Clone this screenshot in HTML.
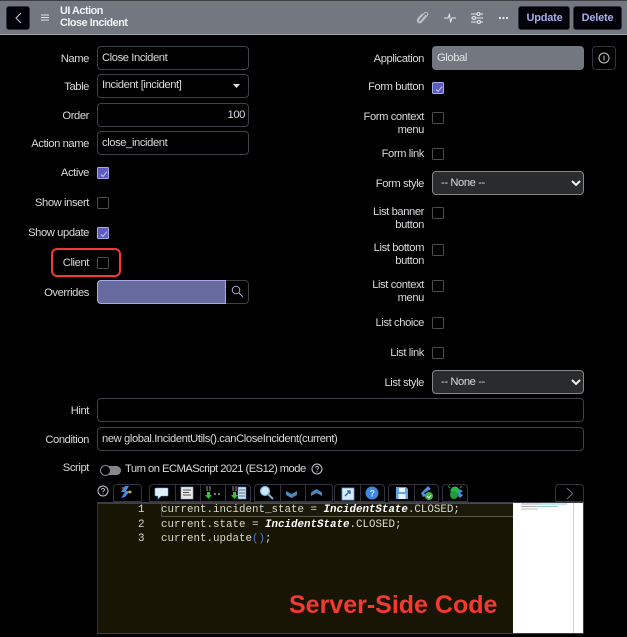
<!DOCTYPE html>
<html><head><meta charset="utf-8">
<style>
html,body{margin:0;padding:0;background:#000;}
body{width:627px;height:637px;position:relative;overflow:hidden;font-family:"Liberation Sans",sans-serif;font-size:11.2px;color:#d8dadd;letter-spacing:-.4px;}
div,span{position:absolute;box-sizing:border-box;white-space:nowrap;}
.l{text-align:right;line-height:14px;margin-top:1px;}
.ll{width:89px;left:0;}
.lr{width:110px;left:314px;}
.i{height:24px;border:1px solid #3f4148;border-radius:4px;line-height:23px;padding-left:4px;color:#d8dadd;}
.c{width:12px;height:12px;border:1px solid #4b4c50;border-radius:1.5px;}
.k{width:12px;height:12px;border:1px solid #a9abe8;background:#5a5cc0;border-radius:1.5px;}
.k svg{position:absolute;left:1px;top:1px;}
.s{left:432px;width:152px;height:24px;background:#2a2b2c;border:1px solid #85878b;border-radius:4px;line-height:23px;padding-left:8px;}
.s svg{position:absolute;left:138px;top:8px;}
.g{top:484px;height:18px;border:1px solid #33343f;border-radius:4px 4px 0 0;}
.p{top:0;width:1px;height:17px;background:#33343f;}
.m{font-family:"Liberation Mono",monospace;font-size:10.83px;letter-spacing:0;color:#dcdccc;line-height:14px;}
.m b{font-style:italic;color:#fff;}
</style></head><body>

<div style="left:0;top:0;width:627px;height:35px;background:#737880;border-top:1px solid #3c3e42;border-bottom:1px solid #a0a4aa;"></div>
<div style="left:6px;top:6px;width:24px;height:24px;background:#020208;border:1px solid #33343f;border-radius:3px;"></div>
<svg style="position:absolute;left:14px;top:11px" width="9" height="14"><path d="M7 2 L2 7 L7 12" fill="none" stroke="#c9cad0" stroke-width="1"/></svg>
<svg style="position:absolute;left:40px;top:14px" width="10" height="8"><path d="M1 1H9M1 3.5H9M1 6H9" stroke="#e0e2e4" stroke-width="1"/></svg>
<div style="left:60px;top:5px;line-height:13px;font-weight:bold;color:#f2f3f4;font-size:10.8px;letter-spacing:-.45px">UI Action</div>
<div style="left:60px;top:17px;line-height:13px;font-weight:bold;color:#f2f3f4;font-size:10.8px;letter-spacing:-.45px">Close Incident</div>

<svg style="position:absolute;left:416px;top:11px" width="14" height="14"><path d="M10 4 L5 10 C3.500 11.800 1.500 10 3 8 L8.500 2 C10.500 0.500 12.800 2.500 11.200 4.500 L6 10.500 C3.500 13.500 0 11 2 7.500 L6 3" fill="none" stroke="#bfc2c6" stroke-width="1"/></svg>
<svg style="position:absolute;left:443px;top:11px" width="14" height="14"><path d="M1 7H5L6.5 3.5L7.5 11.5L9 7H13" fill="none" stroke="#e8e9eb" stroke-width="1"/></svg>
<svg style="position:absolute;left:470px;top:11px" width="14" height="14"><path d="M1 3H13M1 7H13M1 11H13" stroke="#e8e9eb" stroke-width="1"/><circle cx="8.5" cy="3" r="1.5" fill="#737880" stroke="#e8e9eb"/><circle cx="4" cy="7" r="1.5" fill="#737880" stroke="#e8e9eb"/><circle cx="9" cy="11" r="1.5" fill="#737880" stroke="#e8e9eb"/></svg>
<svg style="position:absolute;left:498px;top:15px" width="12" height="6"><circle cx="2" cy="3" r="1.1" fill="#eee"/><circle cx="5.5" cy="3" r="1.1" fill="#eee"/><circle cx="9" cy="3" r="1.1" fill="#eee"/></svg>
<div style="left:518px;top:6px;width:52px;height:24px;background:#020208;border:1px solid #33343f;border-radius:3px;text-align:center;line-height:22px;font-weight:bold;color:#a9abe8;font-size:11px;letter-spacing:-.2px;padding-left:1px">Update</div>
<div style="left:573px;top:6px;width:49px;height:24px;background:#020208;border:1px solid #33343f;border-radius:3px;text-align:center;line-height:22px;font-weight:bold;color:#a9abe8;font-size:11px;letter-spacing:-.2px">Delete</div>

<div class="l ll" style="top:51px">Name</div>
<div class="i" style="left:97px;top:46px;width:152px">Close Incident</div>
<div class="l ll" style="top:79px">Table</div>
<div class="i" style="left:97px;top:74px;width:152px;line-height:21px">Incident [incident]</div>
<svg style="position:absolute;left:233px;top:84px" width="8" height="5"><path d="M0 0H7L3.5 4Z" fill="#e8e8e8"/></svg>
<div class="l ll" style="top:108px">Order</div>
<div class="i" style="left:97px;top:103px;width:152px;text-align:right;padding-right:3px">100</div>
<div class="l ll" style="top:136px">Action name</div>
<div class="i" style="left:97px;top:131px;width:152px">close_incident</div>

<div class="l ll" style="top:165px">Active</div>
<div class="k" style="left:97px;top:167px"><svg width="10" height="10"><path d="M2 5.5L4 7.5L8 2.5" fill="none" stroke="#d5d6f5" stroke-width=".9"/></svg></div>
<div class="l ll" style="top:195px">Show insert</div>
<div class="c" style="left:97px;top:197px"></div>
<div class="l ll" style="top:225px">Show update</div>
<div class="k" style="left:97px;top:227px"><svg width="10" height="10"><path d="M2 5.5L4 7.5L8 2.5" fill="none" stroke="#d5d6f5" stroke-width=".9"/></svg></div>
<div class="l ll" style="top:255px">Client</div>
<div class="c" style="left:97px;top:257px"></div>
<div style="left:51px;top:248px;width:70px;height:29px;border:2px solid #f5392f;border-radius:6px"></div>
<div class="l ll" style="top:285px">Overrides</div>
<div style="left:97px;top:280px;width:152px;height:24px;border:1px solid #3f4148;border-radius:4px"></div>
<div style="left:97px;top:280px;width:129px;height:24px;background:#676a9f;border:1px solid #a9abe8;border-radius:4px 0 0 4px"></div>
<svg style="position:absolute;left:231px;top:285px" width="13" height="13"><circle cx="5" cy="5" r="3.8" fill="none" stroke="#a8abd0" stroke-width="1"/><path d="M8 8L12 12" stroke="#a8abd0" stroke-width="1"/></svg>

<div class="l lr" style="top:51px">Application</div>
<div style="left:432px;top:46px;width:152px;height:24px;background:#737880;border-radius:4px;line-height:25px;padding-left:5px;color:#e2e3e5">Global</div>
<div style="left:592px;top:46px;width:24px;height:24px;border:1px solid #33343f;border-radius:4px"></div>
<svg style="position:absolute;left:598px;top:52px" width="12" height="12"><circle cx="6" cy="6" r="5" fill="none" stroke="#c5c7ce" stroke-width="1"/><path d="M6 3.5V8.5" stroke="#c5c7ce" stroke-width="1"/></svg>
<div class="l lr" style="top:79px">Form button</div>
<div class="k" style="left:432px;top:82px"><svg width="10" height="10"><path d="M2 5.5L4 7.5L8 2.5" fill="none" stroke="#d5d6f5" stroke-width=".9"/></svg></div>
<div class="l lr" style="top:110px;line-height:13px">Form context<br>menu</div>
<div class="c" style="left:432px;top:112px"></div>
<div class="l lr" style="top:146px">Form link</div>
<div class="c" style="left:432px;top:148px"></div>
<div class="l lr" style="top:176px">Form style</div>
<div class="s" style="top:171px">-- None --<svg width="10" height="7"><path d="M1 1L5 5L9 1" fill="none" stroke="#f0f0f0" stroke-width="2"/></svg></div>
<div class="l lr" style="top:205px;line-height:13px">List banner<br>button</div>
<div class="c" style="left:432px;top:207px"></div>
<div class="l lr" style="top:241px;line-height:13px">List bottom<br>button</div>
<div class="c" style="left:432px;top:244px"></div>
<div class="l lr" style="top:278px;line-height:13px">List context<br>menu</div>
<div class="c" style="left:432px;top:280px"></div>
<div class="l lr" style="top:315px">List choice</div>
<div class="c" style="left:432px;top:317px"></div>
<div class="l lr" style="top:345px">List link</div>
<div class="c" style="left:432px;top:347px"></div>
<div class="l lr" style="top:375px">List style</div>
<div class="s" style="top:370px">-- None --<svg width="10" height="7"><path d="M1 1L5 5L9 1" fill="none" stroke="#f0f0f0" stroke-width="2"/></svg></div>

<div class="l ll" style="top:403px">Hint</div>
<div class="i" style="left:97px;top:398px;width:487px"></div>
<div class="l ll" style="top:432px">Condition</div>
<div class="i" style="left:97px;top:427px;width:487px">new global.IncidentUtils().canCloseIncident(current)</div>
<div class="l ll" style="top:460px">Script</div>
<div style="left:100px;top:466px;width:21px;height:9px;background:#85878b;border-radius:5px"></div>
<div style="left:100px;top:465px;width:11px;height:11px;background:#000;border:1px solid #85878b;border-radius:50%"></div>
<div style="left:125px;top:462px;line-height:14px;letter-spacing:-.53px">Turn on ECMAScript 2021 (ES12) mode</div>
<svg style="position:absolute;left:311px;top:463px" width="12" height="12"><circle cx="6" cy="6" r="5" fill="none" stroke="#c5c7ce" stroke-width="1"/><path d="M4.5 4.8C4.5 3 7.5 3 7.5 4.8C7.5 6 6 5.8 6 7.2M6 8.2V9.2" fill="none" stroke="#c5c7ce" stroke-width=".9"/></svg>

<svg style="position:absolute;left:97px;top:485px" width="12" height="12"><circle cx="6" cy="6" r="5" fill="none" stroke="#c5c7ce" stroke-width="1"/><path d="M4.5 4.8C4.5 3 7.5 3 7.5 4.8C7.5 6 6 5.8 6 7.2M6 8.2V9.2" fill="none" stroke="#c5c7ce" stroke-width=".9"/></svg>
<div class="g" style="left:113px;width:29px"></div>
<div class="g" style="left:149px;width:102px"><span class="p" style="left:25px"></span><span class="p" style="left:50px"></span><span class="p" style="left:75px"></span></div>
<div class="g" style="left:254px;width:79px"><span class="p" style="left:25px"></span><span class="p" style="left:50px"></span></div>
<div class="g" style="left:334px;width:51px"><span class="p" style="left:25px"></span></div>
<div class="g" style="left:388px;width:51px"><span class="p" style="left:25px"></span></div>
<div class="g" style="left:442px;width:26px"></div>
<div class="g" style="left:555px;width:29px"></div>
<svg style="position:absolute;left:566px;top:487px" width="8" height="13"><path d="M1 1L6.5 6.5L1 12" fill="none" stroke="#6c6e7c" stroke-width="1"/></svg>

<svg style="position:absolute;left:0;top:484px" width="480" height="18">
<path d="M125 2L129 2L126 7L130 7L125 13L121 14L125 8L121 8Z" fill="#3f8fe8"/><circle cx="130" cy="8" r="1.5" fill="#e8a030"/><circle cx="123" cy="4" r="1" fill="#e04040"/>
<path d="M156 4H167Q168 4 168 5V11Q168 12 167 12H161L158 15V12H156Q155 12 155 11V5Q155 4 156 4Z" fill="#dff0fb" stroke="#6fb4e4" stroke-width=".6"/>
<rect x="181" y="3" width="12" height="12" fill="#e6e9ec" stroke="#8fa9c0" stroke-width=".6"/><path d="M183 6H191M183 8.5H189M183 11H191" stroke="#555" stroke-width="1"/>
<path d="M207 2V7M210 2V7" stroke="#999" stroke-width="1"/><path d="M207 8V11H205L208.500 15L212 11H210V8Z" fill="#33c42f"/><path d="M214 10H216M218 10H220" stroke="#777" stroke-width="2"/>
<path d="M233 2V7M236 2V7" stroke="#999" stroke-width="1"/><path d="M233 8V11H231L234.500 15L238 11H236V8Z" fill="#33c42f"/><rect x="238" y="3" width="8" height="12" fill="#cfe1f2" stroke="#4f8fd0" stroke-width=".6"/><path d="M239 6H245M239 9H245M239 12H245" stroke="#5a6d80" stroke-width="1"/>
<circle cx="265" cy="7" r="4.500" fill="#cfe8fa" stroke="#79b4dd" stroke-width="1.200"/><path d="M268.500 10.500L273 15" stroke="#7fa8cc" stroke-width="2"/>
<path d="M286 7L291.500 10L297 7L297 11L291.500 14L286 11Z" fill="#4e88b8"/>
<path d="M311 12L316.500 9L322 12L322 8.500L316.500 5L311 8.500Z" fill="#4e88b8"/>
<rect x="342" y="4" width="12" height="12" fill="#d8e9f7" stroke="#6da7d6" stroke-width=".8"/><path d="M345 12L350 7M347 7H350V10" stroke="#2465a5" stroke-width="1.300" fill="none"/>
<circle cx="372" cy="9" r="6.500" fill="#3d86de"/><text x="372" y="12.500" text-anchor="middle" font-family="Liberation Sans" font-size="9" font-weight="bold" fill="#d7e9fb">?</text>
<path d="M396 3H406L408 5V15H396Z" fill="#5ea5ea"/><rect x="399" y="4" width="6" height="4" fill="#e8f2fb"/><rect x="398.500" y="10" width="7" height="5" fill="#e8f2fb"/>
<path d="M428 2L431 5L424 9L427 12L423 13L421 9Z" fill="#4f8fe0"/><circle cx="429" cy="12" r="4" fill="#39b54a"/><path d="M427 12L429 14L431 11" stroke="#fff" fill="none" stroke-width=".9"/>
<circle cx="455" cy="7" r="4.500" fill="#27b84a"/><circle cx="454" cy="11" r="4" fill="#1f9d3d"/><path d="M459 5L463 7L460 9L463 11L460 14L458 12Z" fill="#4a8ee0"/><path d="M450 4L448 2M460 4L462 2" stroke="#1f9d3d"/>
</svg>

<div style="left:97px;top:502px;width:487px;height:132px;background:#181504;border:1px solid #3c3e48;border-left-color:#33343a;border-top-width:2px"></div>
<div style="left:161px;top:503px;width:352px;height:14px;border:1px solid #4c4b3c;border-right:0;border-bottom-color:#5a594a;background:#1c1a0a"></div>
<div style="left:513px;top:503px;width:60px;height:130px;background:#fff"></div>
<div style="left:573px;top:503px;width:1px;height:130px;background:#d4d4d4"></div>
<div style="left:574px;top:503px;width:9px;height:130px;background:#fff"></div>
<svg style="position:absolute;left:521px;top:503px" width="50" height="10"><path d="M0 1H20" stroke="#aaa" stroke-width="1"/><path d="M20 1H46" stroke="#8fd0d0" stroke-width="1"/><path d="M0 3.500H15" stroke="#aaa" stroke-width="1"/><path d="M15 3.500H37" stroke="#8fd0d0" stroke-width="1"/><path d="M0 6H17" stroke="#bbb" stroke-width="1"/></svg>

<div class="m" style="left:138px;top:503px;">1</div>
<div class="m" style="left:138px;top:517.500px;">2</div>
<div class="m" style="left:138px;top:532px;">3</div>
<div class="m" style="left:161px;top:503px;">current.incident_state = <b>IncidentState</b>.CLOSED;</div>
<div class="m" style="left:161px;top:517.500px;">current.state = <b>IncidentState</b>.CLOSED;</div>
<div class="m" style="left:161px;top:532px;">current.update<span style="position:static;color:#4a7de0">()</span>;</div>

<div style="left:289px;top:591px;font-size:25px;font-weight:bold;color:#f5392f;line-height:28px;letter-spacing:0">Server-Side Code</div>

</body></html>
